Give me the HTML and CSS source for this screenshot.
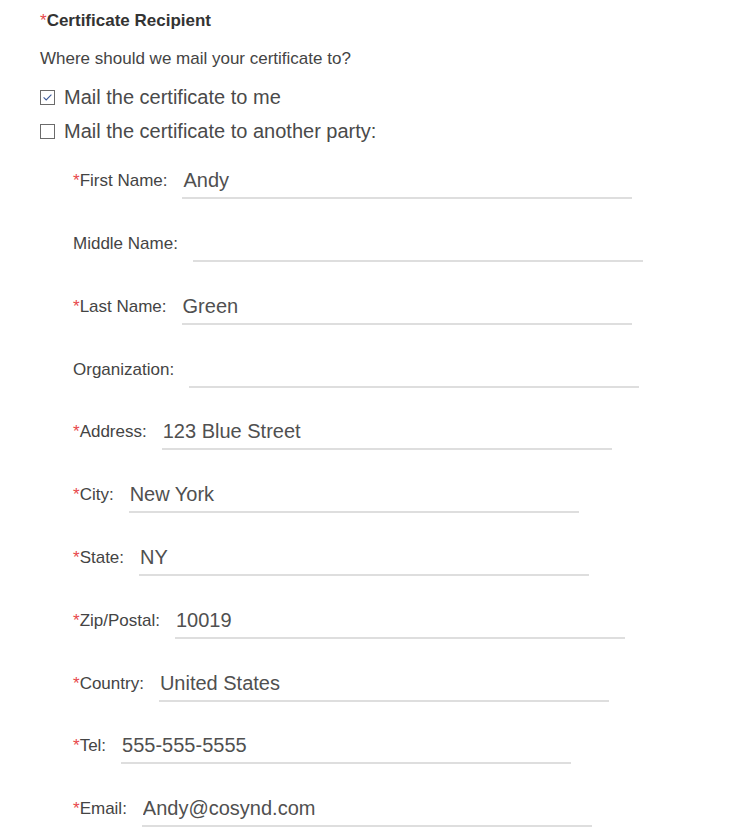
FILE: index.html
```html
<!DOCTYPE html>
<html lang="en">
<head>
<meta charset="utf-8">
<title>Certificate Recipient</title>
<link rel="stylesheet" href="styles.css">
</head>
<body>
<div class="page">
  <h2 class="section-title"><span class="req">*</span>Certificate Recipient</h2>
  <p class="question">Where should we mail your certificate to?</p>
  <div class="options">
    <label class="option">
      <span class="box">
        <svg width="15" height="15" viewBox="0 0 15 15"><rect x="0.5" y="0.5" width="14" height="14" fill="#fff" stroke="#6b6b6b"/><path d="M3.6 7.4 L6.2 10 L11.4 4.6" fill="none" stroke="#3d5a99" stroke-width="1.1"/></svg>
      </span>
      <span class="option-text">Mail the certificate to me</span>
    </label>
    <label class="option">
      <span class="box">
        <svg width="15" height="15" viewBox="0 0 15 15"><rect x="0.5" y="0.5" width="14" height="14" fill="#fff" stroke="#6b6b6b"/></svg>
      </span>
      <span class="option-text">Mail the certificate to another party:</span>
    </label>
  </div>
  <div class="fields">
    <div class="field"><span class="label"><span class="req">*</span>First Name:</span><input class="input" type="text" value="Andy"></div>
    <div class="field"><span class="label">Middle Name:</span><input class="input" type="text" value=""></div>
    <div class="field"><span class="label"><span class="req">*</span>Last Name:</span><input class="input" type="text" value="Green"></div>
    <div class="field"><span class="label">Organization:</span><input class="input" type="text" value=""></div>
    <div class="field"><span class="label"><span class="req">*</span>Address:</span><input class="input" type="text" value="123 Blue Street"></div>
    <div class="field"><span class="label"><span class="req">*</span>City:</span><input class="input" type="text" value="New York"></div>
    <div class="field"><span class="label"><span class="req">*</span>State:</span><input class="input" type="text" value="NY"></div>
    <div class="field"><span class="label"><span class="req">*</span>Zip/Postal:</span><input class="input" type="text" value="10019"></div>
    <div class="field"><span class="label"><span class="req">*</span>Country:</span><input class="input" type="text" value="United States"></div>
    <div class="field"><span class="label"><span class="req">*</span>Tel:</span><input class="input" type="text" value="555-555-5555"></div>
    <div class="field"><span class="label"><span class="req">*</span>Email:</span><input class="input" type="text" value="Andy@cosynd.com"></div>
  </div>
</div>
</body>
</html>
```
FILE: styles.css
```css
html, body {
  margin: 0;
  padding: 0;
  background: #ffffff;
}

body {
  font-family: "Liberation Sans", Arial, sans-serif;
  color: #444;
}

.page {
  padding: 11px 0 0 40px;
}

.req {
  color: #e8474b;
  font-weight: normal;
}

.section-title {
  margin: 0;
  font-size: 17px;
  line-height: 20px;
  font-weight: bold;
  color: #333;
}

.question {
  margin: 18px 0 0 0;
  font-size: 17px;
  line-height: 20px;
  color: #444;
}

.options {
  margin-top: 16px;
  display: flex;
  flex-direction: column;
  gap: 10.2px;
}

.option {
  display: flex;
  align-items: center;
  gap: 9px;
  font-size: 20px;
  line-height: 24px;
  color: #4a4a4a;
}

.box {
  display: flex;
  width: 15px;
  height: 15px;
}

.fields {
  margin-top: 26px;
  padding-left: 33px;
  display: flex;
  flex-direction: column;
  gap: 32.8px;
}

.field {
  display: flex;
  align-items: center;
  gap: 15px;
}

.label {
  font-size: 17px;
  line-height: 20px;
  color: #444;
  padding-bottom: 6px;
}

.input {
  width: 450px;
  height: 30px;
  box-sizing: border-box;
  margin: 0;
  padding: 0 1px 5px 1px;
  border: none;
  border-bottom: 2px solid #dedede;
  outline: none;
  background: transparent;
  font-family: "Liberation Sans", Arial, sans-serif;
  font-size: 20px;
  color: #505050;
}
```
